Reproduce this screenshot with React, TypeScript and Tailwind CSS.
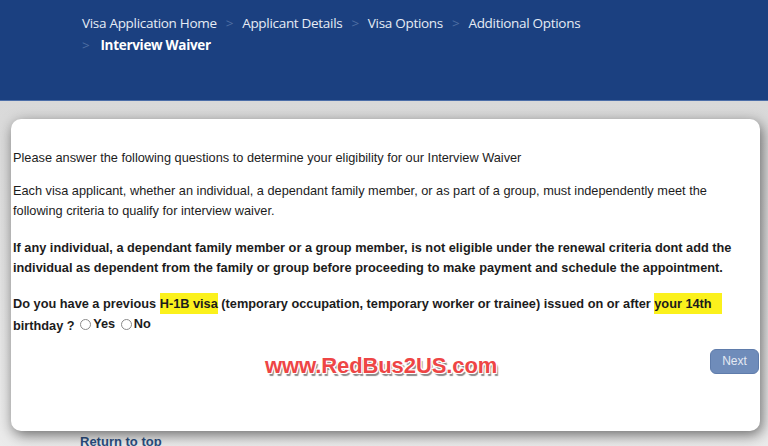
const crumbs = ["Visa Application Home", "Applicant Details", "Visa Options", "Additional Options"];

function Sep() {
  return <span className="mx-[9px] text-[#4f6ea3]">&gt;</span>;
}

function Radio({ label }: { label: string }) {
  return (
    <label className="inline-flex items-center">
      <span className="mx-[2px] inline-block h-[11px] w-[11px] rounded-full border border-[#8a8a8a] bg-white" />
      <span>{label}</span>
    </label>
  );
}

export default function App() {
  return (
    <div className="h-[446px] w-[768px] overflow-hidden bg-[#ececec]">
      <header className="h-[101px] border-b border-[#4c6ea8] bg-[#1b4080] pl-[82px] pt-[12px] font-['Open_Sans',sans-serif] text-[13.5px] leading-[22px] tracking-[-0.3px] text-[#e6ecf5]">
        <div>
          {crumbs.map((c, i) => (
            <span key={c}>
              {i > 0 && <Sep />}
              <span>{c}</span>
            </span>
          ))}
        </div>
        <div>
          <span className="mr-[11px] text-[#4f6ea3]">&gt;</span>
          <span className="font-bold text-white">Interview Waiver</span>
        </div>
      </header>

      <main className="bg-gradient-to-b from-[#d9d9d9] to-[#ececec] pl-[11px] pr-[8px] pt-[18px]">
        <section className="relative h-[312px] rounded-[10px] bg-white pl-[2px] pr-[10px] pt-[29px] font-['Liberation_Sans',Arial,sans-serif] text-[12.75px] leading-[20px] text-[#1c1c1c] shadow-[2px_4px_14px_rgba(0,0,0,0.55)]">
          <p>Please answer the following questions to determine your eligibility for our Interview Waiver</p>
          <p className="mt-[13px]">
            Each visa applicant, whether an individual, a dependant family member, or as part of a group, must independently meet the
            following criteria to qualify for interview waiver.
          </p>
          <p className="mt-[17px] font-bold">
            If any individual, a dependant family member or a group member, is not eligible under the renewal criteria dont add the
            individual as dependent from the family or group before proceeding to make payment and schedule the appointment.
          </p>
          <p className="mt-[16px] font-bold">
            Do you have a previous <span className="bg-[#fbf11c] py-[3px]">H-1B visa</span> (temporary occupation, temporary
            worker or trainee) issued on or after{" "}
            <span className="bg-[#fbf11c] py-[3px] pr-[10px]">your 14th</span>
            <br />
            birthday ? <Radio label="Yes" /> <Radio label="No" />
          </p>
          <div className="-mr-[9px] mt-[13px] flex justify-end">
            <button className="h-[25px] w-[49px] rounded-[6px] border border-[#5f7cab] bg-[#6f8cba] text-[12px] text-[#e3e9f3]">
              Next
            </button>
          </div>
          <div className="absolute left-[254px] top-[237px] font-['Liberation_Sans',Arial,sans-serif] text-[22px] font-bold tracking-[-0.1px] text-[#ee4545] [text-shadow:1px_1px_0_#fff,-1px_-1px_0_#fff,1px_-1px_0_#fff,-1px_1px_0_#fff,2px_3px_1px_#8a8a8a]">
            www.RedBus2US.com
          </div>
        </section>
        <div className="pl-[69px] pt-[1px] font-['Liberation_Sans',Arial,sans-serif] text-[13px] font-bold leading-[20px] text-[#2b4f82]">
          Return to top
        </div>
      </main>
    </div>
  );
}
